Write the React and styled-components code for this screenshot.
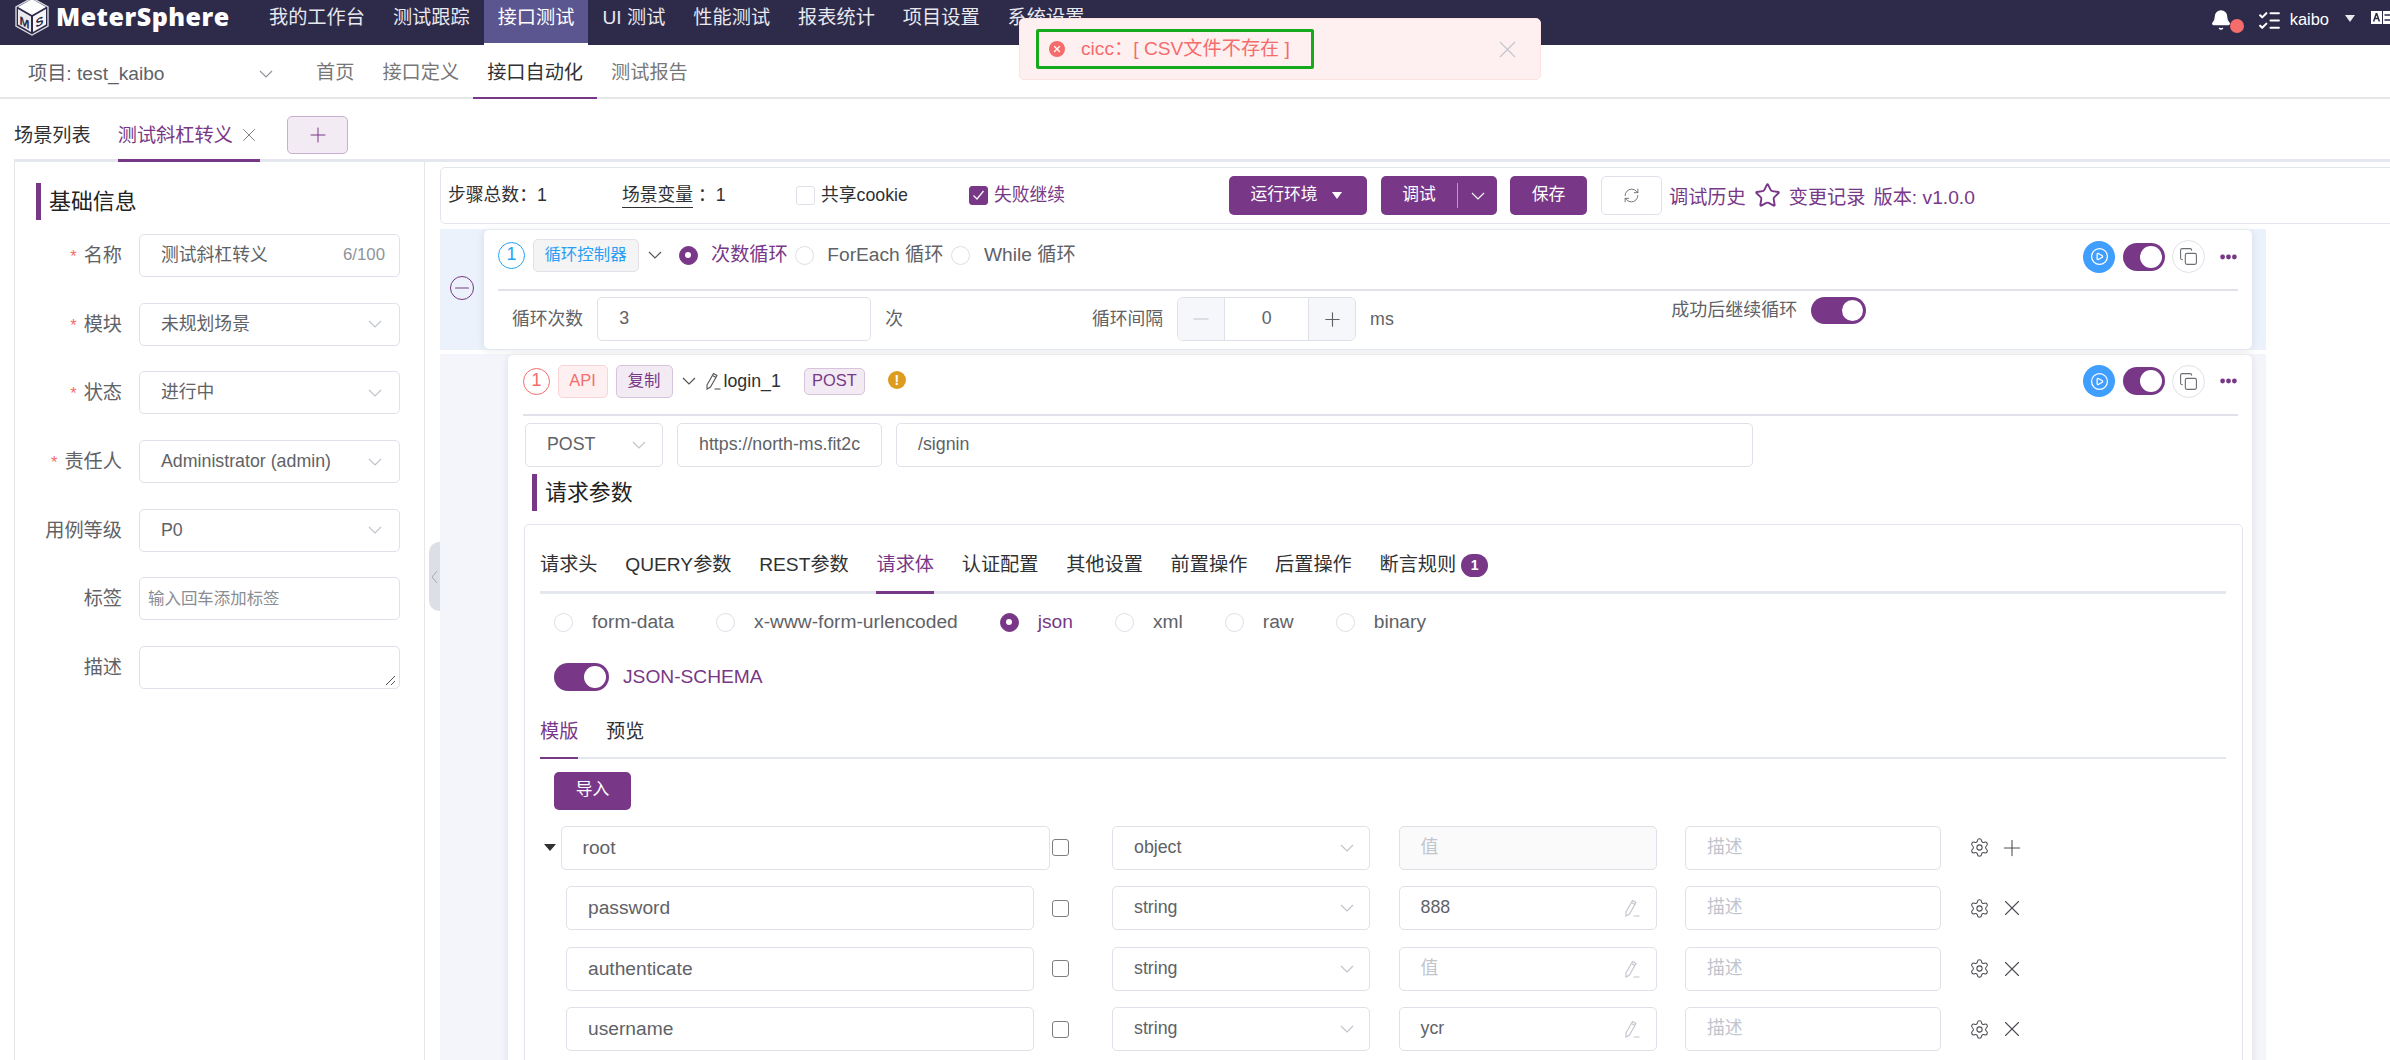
import React from "react";
import styled, { createGlobalStyle } from "styled-components";
import { Bell, ListChecks, RefreshCw, Star, Settings, Plus, X, Minus, CirclePlay, Copy } from "lucide-react";

const PURPLE = "#783887";
const BORDER = "#dfe1e9";
const TEXT = "#606266";

const Global = createGlobalStyle`
  html, body { margin: 0; padding: 0; background: #fff; overflow: hidden; }
  body, button { font-family: "Liberation Sans", "Noto Sans CJK SC", sans-serif; font-size: 19.2px; line-height: 1.2; color: ${TEXT}; }
  * { box-sizing: border-box; }
`;

const Page = styled.div`position: relative; width: 2390px; height: 1060px; overflow: hidden; display: flex; flex-direction: column;`;

/* top bar */
const TopBar = styled.header`height: 45px; flex: none; background: #2d2a4a; display: flex; align-items: stretch; color: #fff;`;
const Brand = styled.div`width: 255px; padding-left: 14px; display: flex; align-items: flex-start; gap: 6px;`;
const BrandName = styled.span`font-family: "Open Sans", "Liberation Sans", sans-serif; font-weight: 800; font-size: 25px; line-height: 32px; letter-spacing: 0.5px; color: #fff;`;
const TopItem = styled.div`
  padding: 0 14px; display: flex; align-items: center; height: 45px; padding-bottom: 8px;
  color: ${(p) => (p.$active ? "#fff" : "#e8e8ee")};
  background: ${(p) => (p.$active ? "#5b5590" : "transparent")};
  border-bottom: 2px solid ${(p) => (p.$active ? "#fff" : "transparent")};
`;
const TopRight = styled.div`margin-left: auto; display: flex; align-items: flex-start; padding-top: 10px; margin-right: -4px; flex: none;`;
const BellWrap = styled.div`position: relative; width: 18px; height: 20px; svg { display: block; margin-left: -2px; margin-top: -1px; }`;
const RedDot = styled.span`position: absolute; left: 18px; top: 9px; width: 14px; height: 14px; border-radius: 50%; background: #f56c6c;`;
const ListWrap = styled.div`margin-left: 27px; height: 20px; margin-top: -2px; svg { display: block; }`;
const UserName = styled.span`margin-left: 8px; font-size: 16.45px; line-height: 16px; margin-top: 1px; color: #fff;`;
const UserCaret = styled.span`margin-left: 16px; margin-top: 5px; width: 0; height: 0; border-left: 5.5px solid transparent; border-right: 5.5px solid transparent; border-top: 7px solid #e8e8ee;`;
const LangIcon = styled.svg`margin-left: 16px; margin-top: 1px; width: 23px; height: 13px; display: block; flex: none;`;

/* sub bar */
const SubBar = styled.nav`height: 54px; flex: none; display: flex; border-bottom: 2px solid #e6e6e6;`;
const ProjectSelect = styled.div`width: 302px; padding: 6px 29px 0 28px; display: flex; align-items: center; justify-content: space-between;`;
const SubTab = styled.div`
  padding: 3px 14px 0; display: flex; align-items: center; height: 54px;
  color: ${(p) => (p.$active ? "#303133" : "#777")};
  border-bottom: 2px solid ${(p) => (p.$active ? PURPLE : "transparent")};
  margin-bottom: -2px;
`;

/* scenario tabs */
const TabBar = styled.div`height: 63px; flex: none; margin-left: 14px; display: flex; border-bottom: 3px solid #e4e7ed;`;
const SceneTab = styled.div`
  margin-right: 27px;
  padding-top: 25px; height: 63px; display: flex; gap: 5.5px;
  color: ${(p) => (p.$active ? PURPLE : "#303133")};
  border-bottom: 3px solid ${(p) => (p.$active ? PURPLE : "transparent")};
  svg { color: #777; flex: none; }
`;
const AddTab = styled.div`margin-top: 17px; width: 61px; height: 38px; background: #f2ebf3; border: 1px solid #c9afcf; border-radius: 5px; color: ${PURPLE}; display: flex; align-items: center; justify-content: center;`;

const Body = styled.div`flex: 1; min-height: 0; display: flex;`;

/* left panel */
const LeftPanel = styled.aside`margin-left: 14px; width: 411px; flex: none; border-left: 1px solid #e6e6e6; border-right: 1px solid #e6e6e6; padding: 21px 0 0 21px;`;
const SectionTitle = styled.h3`
  margin: 0; border-left: 5px solid ${PURPLE}; height: 37px; padding: 1.5px 0 0 8px; font-size: 21.9px; font-weight: 400; color: #222; display: flex; align-items: center;
`;
const FormGrid = styled.div`margin: 14px 0 0 -21px; display: grid; grid-auto-rows: 43px; row-gap: 25.7px;`;
const FormRow = styled.div`display: flex; align-items: center;`;
const FormLabel = styled.label`width: 107px; text-align: right; margin-right: 17px; color: ${TEXT}; white-space: nowrap;`;
const Req = styled.span`color: #f56c6c; margin-right: 7px; font-size: 16.4px;`;
const Field = styled.div`
  height: ${(p) => p.$h || "43px"}; flex: none; width: ${(p) => p.$w || "auto"}; margin-left: ${(p) => p.$ml || "0"};
  border: 1px solid ${BORDER}; border-radius: 5px; background: ${(p) => (p.$disabled ? "#fafafa" : "#fff")};
  display: flex; align-items: center; justify-content: space-between; padding: 0 ${(p) => p.$pr || "17px"} 0 ${(p) => p.$pl || "21px"};
  color: ${TEXT}; white-space: nowrap; overflow: hidden; position: relative; font-size: ${(p) => p.$fs || "17.8px"};
`;
const Hint = styled.span`font-size: 16.8px; color: #909399; margin-right: -3px;`;
const Placeholder = styled.span`color: #c0c4cc;`;
const TagPlaceholder = styled.span`color: #8a8d93; font-size: 16.45px;`;
const ResizeMark = styled.svg`position: absolute; right: 3px; bottom: 2px; width: 11px; height: 11px;`;

const Gutter = styled.div`width: 15px; flex: none; position: relative;`;
const Handle = styled.div`position: absolute; left: 4px; top: 380px; width: 11px; height: 69px; background: #dcdfe6; border-radius: 10px 0 0 10px; display: flex; align-items: center; justify-content: center; color: #a8abb2;`;

/* main column */
const Main = styled.main`flex: 1; min-width: 0; overflow: hidden;`;
const Toolbar = styled.div`
  margin: 5px -10px 0 0; height: 57px; border: 1px solid #e4e4ec; border-radius: 5px; padding: 0 0 0 7px;
  display: flex; align-items: center;
`;
const Stat = styled.div`width: 174px; flex: none; font-size: 17.8px; color: #303133; white-space: nowrap;`;
const Underlined = styled.span`border-bottom: 1px solid #303133; padding-bottom: 2px;`;
const CheckItem = styled.div`
  width: ${(p) => p.$w}; flex: none; display: flex; align-items: center; font-size: 17.8px; gap: 6px;
  color: ${(p) => (p.$on ? PURPLE : "#303133")};
`;
const CheckBox = styled.span`
  width: ${(p) => p.$size || "19px"}; height: ${(p) => p.$size || "19px"}; flex: none; border-radius: 3px;
  border: 1px solid ${(p) => (p.$on ? PURPLE : p.$dark ? "#7d7d7d" : BORDER)};
  background: ${(p) => (p.$on ? PURPLE : "#fff")}; display: flex; align-items: center; justify-content: center;
`;
const PrimaryBtn = styled.button`
  height: ${(p) => p.$h || "39px"}; width: ${(p) => p.$w}; margin-left: ${(p) => p.$ml || "0"}; flex: none; border: 0; border-radius: 5px; padding: 0 ${(p) => p.$pr || "0"} 0 0;
  background: ${PURPLE}; color: #fff; font-size: 16.8px; display: flex; align-items: center; justify-content: center; gap: ${(p) => p.$gap || "0"};
`;
const Caret = styled.span`width: 0; height: 0; border-left: 5px solid transparent; border-right: 5px solid transparent; border-top: 7px solid #fff;`;
const SplitMain = styled.span`width: 77px; height: 25px; display: flex; align-items: center; justify-content: center; border-right: 1px solid rgba(255,255,255,.5);`;
const SplitArrow = styled.span`width: 39px; display: flex; align-items: center; justify-content: center;`;
const IconBtn = styled.button`height: 39px; width: 61px; margin-left: 14px; flex: none; background: #fff; border: 1px solid ${BORDER}; border-radius: 5px; padding: 0; display: flex; align-items: center; justify-content: center; color: #606266;`;
const LinkText = styled.span`color: ${PURPLE}; margin-left: ${(p) => p.$ml || "0"}; margin-top: 5px; flex: none; white-space: nowrap;`;
const StarWrap = styled.span`margin-left: 8px; height: 27px; flex: none; color: ${PURPLE}; svg { display: block; }`;

/* steps */
const BlueBand = styled.section`margin-top: 5px; width: 1826px; height: 121px; background: #ebf2fb; display: flex; align-items: center; position: relative;`;
const Collapse = styled.span`margin: 0 10px 3px 10px; width: 24px; height: 24px; border: 1.5px solid ${PURPLE}; border-radius: 50%; flex: none; display: flex; align-items: center; justify-content: center; color: ${PURPLE}; svg { flex: none; }`;
const GrayBand = styled.section`margin-top: 4px; width: 1826px; height: 900px; background: #f3f5fa; padding: 1px 0 0 68px;`;
const StepCard = styled.div`
  background: #fff; border-radius: 5px; box-shadow: 0 1px 8px rgba(40,40,60,.1);
  width: ${(p) => p.$w}; height: ${(p) => p.$h || "auto"}; padding: 0 14px 0 ${(p) => p.$pl};
`;
const StepHead = styled.div`height: ${(p) => p.$h}; display: flex; align-items: center;`;
const Badge = styled.span`width: 27px; height: 27px; border-radius: 50%; flex: none; border: 1px solid ${(p) => p.$c}; color: ${(p) => p.$c}; font-size: 17.8px; display: flex; align-items: center; justify-content: center;`;
const Tag = styled.span`
  height: ${(p) => p.$h || "33px"}; width: ${(p) => p.$w}; margin-left: ${(p) => p.$ml || "7.5px"}; flex: none; border-radius: 5px; font-size: 16.45px;
  display: flex; align-items: center; justify-content: center;
  background: ${(p) => p.$bg}; border: 1px solid ${(p) => p.$bd}; color: ${(p) => p.$c};
`;
const ChevronSvg = styled.svg`flex: none; width: ${(p) => p.$w || "14px"}; height: 8px; margin-left: ${(p) => p.$ml || "0"}; display: block;`;
const RadioDot = styled.span`
  width: 19px; height: 19px; flex: none; border-radius: 50%; border: 1px solid ${(p) => (p.$on ? PURPLE : "#dcdfe6")};
  background: ${(p) => (p.$on ? PURPLE : "#fff")}; display: flex; align-items: center; justify-content: center;
  &::after { content: ""; width: 6px; height: 6px; border-radius: 50%; background: ${(p) => (p.$on ? "#fff" : "transparent")}; }
`;
const RadioOption = styled.div`display: flex; align-items: center; gap: ${(p) => p.$gap || "13.5px"}; margin-left: ${(p) => p.$ml || "0"}; color: ${(p) => (p.$on ? PURPLE : TEXT)}; white-space: nowrap;`;
const StepActions = styled.div`margin-left: auto; display: flex; align-items: center; margin-top: ${(p) => p.$mt || "3px"};`;
const PlayBtn = styled.span`width: 32px; height: 32px; border-radius: 50%; background: #409eff; color: #fff; display: flex; align-items: center; justify-content: center;`;
const Toggle = styled.span`
  width: ${(p) => p.$w}; height: ${(p) => p.$h}; margin-left: ${(p) => p.$ml || "0"}; flex: none; border-radius: 20px; background: ${PURPLE}; display: flex; align-items: center; justify-content: flex-end; padding-right: 3px;
  &::after { content: ""; width: ${(p) => `calc(${p.$h} - 6px)`}; height: ${(p) => `calc(${p.$h} - 6px)`}; border-radius: 50%; background: #fff; }
`;
const CopyBtn = styled.span`width: 33px; height: 33px; margin-left: 7px; border-radius: 50%; background: #fff; border: 1px solid #e0e0e8; color: #6b6e75; display: flex; align-items: center; justify-content: center;`;
const MoreSvg = styled.svg`width: 17px; height: 6px; margin: 0 1px 0 15px; display: block;`;
const Divider = styled.div`height: ${(p) => p.$h || "2px"}; background: #e0e1ea;`;
const LoopRow = styled.div`margin-top: 6px; padding-left: 14px; display: flex; align-items: flex-start; font-size: 17.8px;`;
const LoopText = styled.span`margin-left: ${(p) => p.$ml || "0"}; line-height: 44px; white-space: nowrap; flex: none;`;
const NumberInput = styled.div`margin-left: 14px; width: 179px; height: 44px; border: 1px solid ${BORDER}; border-radius: 6px; overflow: hidden; flex: none; display: flex;`;
const NumberStep = styled.span`width: 47px; background: #f5f7fa; display: flex; align-items: center; justify-content: center; color: ${(p) => (p.$off ? "#c0c4cc" : "#606266")}; border-${(p) => (p.$off ? "right" : "left")}: 1px solid ${BORDER}; svg { flex: none; }`;
const NumberValue = styled.span`flex: 1; display: flex; align-items: center; justify-content: center;`;
const AfterLoop = styled.div`margin-left: 277.5px; display: flex; align-items: center; height: 27px; gap: 13.5px; flex: none; font-size: 18px; white-space: nowrap;`;

const LoginName = styled.span`margin-left: 3px; color: #303133; margin-top: 2px; font-size: 17.8px;`;
const EditMark = styled.span`margin-left: ${(p) => p.$ml || "0"}; height: 18px; color: ${(p) => p.$c}; flex: none; svg { display: block; }`;
const Warn = styled.span`margin-left: 23px; margin-top: -2px; width: 18px; height: 18px; border-radius: 50%; background: #dd9c1f; color: #fff; font-size: 14px; font-weight: 700; display: flex; align-items: center; justify-content: center;`;
const RequestRow = styled.div`margin-top: 7px; padding-left: 2px; display: flex; height: 44px;`;
const TitleWrap = styled.div`margin: 7px 0 13px 9px;`;
const ParamPanel = styled.div`margin-left: 1px; width: 1719px; border: 1px solid #e4e4ec; border-radius: 5px; padding: 0 16px 0 15px; height: 560px;`;
const InnerTabs = styled.div`height: ${(p) => p.$h}; padding-top: ${(p) => p.$pt}; border-bottom: ${(p) => p.$line} solid #e4e7ed; display: flex; gap: 27.7px;`;
const InnerTab = styled.div`
  height: calc(100% + ${(p) => p.$line}); display: flex; align-items: center; gap: 5px; white-space: nowrap;
  color: ${(p) => (p.$active ? PURPLE : "#303133")};
  border-bottom: ${(p) => p.$line} solid ${(p) => (p.$active ? PURPLE : "transparent")};
`;
const CountBadge = styled.span`width: 27px; height: 23px; border-radius: 12px; background: ${PURPLE}; color: #fff; font-size: 14px; font-weight: 700; display: flex; align-items: center; justify-content: center;`;
const BodyTypes = styled.div`height: 57px; padding-left: 14px; display: flex; align-items: center; gap: 42px;`;
const SchemaSwitch = styled.div`margin: 12px 0 0 14px; display: flex; align-items: center; gap: 14px; color: ${PURPLE};`;
const ImportWrap = styled.div`margin: 13px 0 16px 14px;`;
const SchemaRows = styled.div`display: grid; grid-auto-rows: 44px; row-gap: 16.5px;`;
const SchemaRow = styled.div`display: flex; align-items: center;`;
const NameCell = styled.div`width: 493.5px; flex: none; padding-left: ${(p) => (p.$root ? "4px" : "26px")}; display: flex; align-items: center; gap: 4.5px;`;
const TreeCaret = styled.span`flex: none; width: 0; height: 0; border-left: 6px solid transparent; border-right: 6px solid transparent; border-top: 7px solid #303133;`;
const CheckSlot = styled.span`margin-left: 18px; flex: none;`;
const RowIcon = styled.span`margin-left: ${(p) => p.$ml}; width: ${(p) => p.$w}; display: flex; justify-content: center; flex: none; color: #4c4e55; svg { display: block; flex: none; }`;

/* toast */
const Toast = styled.div`position: absolute; left: 1019px; top: 18px; width: 522px; height: 62px; background: #fef0f0; border: 1px solid #fde2e2; border-radius: 5px; display: flex; align-items: center; padding: 0 18px 0 16px;`;
const Highlight = styled.div`width: 278px; height: 40px; border: 3px solid #16a91c; border-radius: 2px; display: flex; align-items: center; padding-left: 10px; gap: 16px; color: #f56c6c; white-space: nowrap;`;
const ErrIcon = styled.span`width: 16px; height: 16px; border-radius: 50%; background: #f56c6c; color: #fff; display: flex; align-items: center; justify-content: center; flex: none;`;
const ToastClose = styled.span`margin-left: auto; color: #c0c4cc; display: flex;`;

const Chevron = ({ c = "#c0c4cc", w, ml }) => (
  <ChevronSvg $w={w} $ml={ml} viewBox="0 0 14 8" fill="none"><path d="M1 1l6 6 6-6" stroke={c} strokeWidth="1.2" /></ChevronSvg>
);
const PencilLine = () => (
  <svg width="16" height="18" viewBox="0 0 16 18" fill="none" stroke="currentColor" strokeWidth="1.1">
    <path d="M2 13 8.5 1.5l3.5 2L5.5 15 2 17z" />
    <path d="M7.5 3.4l3.5 2" /><path d="M9.5 17h6" />
  </svg>
);
const LogoMark = () => (
  <svg width="36" height="36" viewBox="0 0 36 36" style={{ display: "block" }}>
    <path d="M18 -2 34 7v19L18 35 2 26V7z" fill="none" stroke="#d8d8e0" strokeWidth="1.4" />
    <path d="M18 -1 32 7 18 15 4 7z" fill="#fff" />
    <path d="M4 9l13 7.6V32L4 24.4z" fill="#e9e9ee" />
    <path d="M32 9l-13 7.6V32l13-7.6z" fill="#f6f6f8" />
    <text x="10.5" y="26" fontSize="12" fontWeight="800" fill="#2d2a4a" fontFamily="Liberation Sans" textAnchor="middle" transform="skewY(28) translate(0 -5)">M</text>
    <text x="25.5" y="26" fontSize="12" fontWeight="800" fill="#2d2a4a" fontFamily="Liberation Sans" textAnchor="middle" transform="skewY(-28) translate(0 13.5)">S</text>
  </svg>
);
const Head = ({ mt }) => (
  <StepActions $mt={mt}>
    <PlayBtn><CirclePlay size={19} strokeWidth={1.6} /></PlayBtn>
    <Toggle $w="42px" $h="28px" $ml="8px" />
    <CopyBtn><Copy size={19} strokeWidth={1.4} /></CopyBtn>
    <MoreSvg viewBox="0 0 17 6" fill={PURPLE}><circle cx="2.6" cy="3" r="2.4" /><circle cx="8.5" cy="3" r="2.4" /><circle cx="14.4" cy="3" r="2.4" /></MoreSvg>
  </StepActions>
);

const topNav = ["我的工作台", "测试跟踪", "接口测试", "UI 测试", "性能测试", "报表统计", "项目设置", "系统设置"];
const subNav = ["首页", "接口定义", "接口自动化", "测试报告"];
const reqTabs = ["请求头", "QUERY参数", "REST参数", "请求体", "认证配置", "其他设置", "前置操作", "后置操作"];
const bodyTypes = ["form-data", "x-www-form-urlencoded", "json", "xml", "raw", "binary"];
const formRows = [
  { label: "名称", req: true, value: "测试斜杠转义", hint: "6/100" },
  { label: "模块", req: true, value: "未规划场景", select: true },
  { label: "状态", req: true, value: "进行中", select: true },
  { label: "责任人", req: true, value: "Administrator (admin)", select: true },
  { label: "用例等级", value: "P0", select: true },
];
const schema = [
  { name: "root", type: "object", root: true },
  { name: "password", type: "string", value: "888" },
  { name: "authenticate", type: "string" },
  { name: "username", type: "string", value: "ycr" },
];

export default function App() {
  return (
    <Page>
      <Global />
      <TopBar>
        <Brand><LogoMark /><BrandName>MeterSphere</BrandName></Brand>
        {topNav.map((t) => <TopItem key={t} $active={t === "接口测试"}>{t}</TopItem>)}
        <TopRight>
          <BellWrap><Bell size={22} fill="#fff" color="#fff" strokeWidth={1.5} /><RedDot /></BellWrap>
          <ListWrap><ListChecks size={25} color="#fff" strokeWidth={2} /></ListWrap>
          <UserName>kaibo</UserName>
          <UserCaret />
          <LangIcon viewBox="0 0 23 13">
            <rect x="0" y="0" width="11" height="13" fill="#fff" />
            <path d="M5.5 2 2.6 10.5M5.5 2l2.9 8.5M3.6 7.6h3.8" stroke="#2d2a4a" strokeWidth="1.5" fill="none" />
            <rect x="12" y="0" width="11" height="13" fill="#fff" />
            <path d="M13.5 4h8M13.5 9h8" stroke="#2d2a4a" strokeWidth="1.3" />
          </LangIcon>
        </TopRight>
      </TopBar>

      <SubBar>
        <ProjectSelect>项目: test_kaibo<Chevron c="#909399" /></ProjectSelect>
        {subNav.map((t) => <SubTab key={t} $active={t === "接口自动化"}>{t}</SubTab>)}
      </SubBar>

      <TabBar>
        <SceneTab>场景列表</SceneTab>
        <SceneTab $active>测试斜杠转义<X size={22} strokeWidth={1} /></SceneTab>
        <AddTab><Plus size={24} strokeWidth={1} /></AddTab>
      </TabBar>

      <Body>
        <LeftPanel>
          <SectionTitle>基础信息</SectionTitle>
          <FormGrid>
            {formRows.map((r) => (
              <FormRow key={r.label}>
                <FormLabel>{r.req && <Req>*</Req>}{r.label}</FormLabel>
                <Field $w="261px">
                  {r.value}
                  {r.hint && <Hint>{r.hint}</Hint>}
                  {r.select && <Chevron />}
                </Field>
              </FormRow>
            ))}
            <FormRow>
              <FormLabel>标签</FormLabel>
              <Field $w="261px" $pl="8px"><TagPlaceholder>输入回车添加标签</TagPlaceholder></Field>
            </FormRow>
            <FormRow>
              <FormLabel>描述</FormLabel>
              <Field $w="261px">
                <ResizeMark viewBox="0 0 11 11" fill="none" stroke="#555" strokeWidth="1"><path d="M1 10 10 1M6 10l4-4" /></ResizeMark>
              </Field>
            </FormRow>
          </FormGrid>
        </LeftPanel>

        <Gutter>
          <Handle>
            <svg width="7" height="14" viewBox="0 0 7 14" fill="none" stroke="#a8abb2" strokeWidth="1"><path d="M6 1 1 7l5 6" /></svg>
          </Handle>
        </Gutter>

        <Main>
          <Toolbar>
            <Stat>步骤总数：1</Stat>
            <Stat><Underlined>场景变量</Underlined> ：1</Stat>
            <CheckItem $w="173px"><CheckBox />共享cookie</CheckItem>
            <CheckItem $w="260px" $on>
              <CheckBox $on>
                <svg width="13" height="11" viewBox="0 0 13 11" fill="none" stroke="#fff" strokeWidth="1.2"><path d="M1.5 5.5 5 9l6.5-8" /></svg>
              </CheckBox>
              失败继续
            </CheckItem>
            <PrimaryBtn $w="138px" $gap="14px" $pr="4px">运行环境<Caret /></PrimaryBtn>
            <PrimaryBtn $w="116px" $ml="14px"><SplitMain>调试</SplitMain><SplitArrow><Chevron c="#fff" /></SplitArrow></PrimaryBtn>
            <PrimaryBtn $w="77px" $ml="13px">保存</PrimaryBtn>
            <IconBtn><RefreshCw size={17} strokeWidth={1.2} /></IconBtn>
            <LinkText $ml="7px">调试历史</LinkText>
            <StarWrap><Star size={27} strokeWidth={1.7} /></StarWrap>
            <LinkText $ml="8px">变更记录</LinkText>
            <LinkText $ml="8px">版本: v1.0.0</LinkText>
          </Toolbar>

          <BlueBand>
            <Collapse><Minus size={22} strokeWidth={1.3} /></Collapse>
            <StepCard $w="1768px" $h="119px" $pl="14px">
              <StepHead $h="50px">
                <Badge $c="#1fa4f6">1</Badge>
                <Tag $w="106px" $bg="#f4f4f5" $bd="#e4dfe8" $c="#2a9df4">循环控制器</Tag>
                <Chevron c="#555" ml="9px" />
                <RadioOption $on $ml="17px"><RadioDot $on />次数循环</RadioOption>
                <RadioOption $ml="7px"><RadioDot />ForEach 循环</RadioOption>
                <RadioOption $ml="8px"><RadioDot />While 循环</RadioOption>
                <Head />
              </StepHead>
              <div style={{ height: 9 }} />
              <Divider />
              <LoopRow>
                <LoopText>循环次数</LoopText>
                <Field $w="274px" $h="44px" $ml="14px" $pl="21px">3</Field>
                <LoopText $ml="14px">次</LoopText>
                <LoopText $ml="189px">循环间隔</LoopText>
                <NumberInput>
                  <NumberStep $off><Minus size={24} strokeWidth={1.2} /></NumberStep>
                  <NumberValue>0</NumberValue>
                  <NumberStep><Plus size={23} strokeWidth={1.2} /></NumberStep>
                </NumberInput>
                <LoopText $ml="14px">ms</LoopText>
                <AfterLoop>成功后继续循环<Toggle $w="55px" $h="27px" /></AfterLoop>
              </LoopRow>
            </StepCard>
          </BlueBand>

          <GrayBand>
            <StepCard $w="1744px" $h="900px" $pl="15px">
              <StepHead $h="52px">
                <Badge $c="#f56c6c">1</Badge>
                <Tag $w="50px" $bg="#fef0f0" $bd="#fbd5d5" $c="#f56c6c">API</Tag>
                <Tag $w="57px" $ml="8px" $bg="#f2ebf3" $bd="#d7c3db" $c={PURPLE}>复制</Tag>
                <Chevron c="#555" ml="9px" />
                <EditMark $ml="9px" $c="#555"><PencilLine /></EditMark>
                <LoginName>login_1</LoginName>
                <Tag $w="61px" $h="27px" $ml="23px" $bg="#f2ebf3" $bd="#d7c3db" $c={PURPLE}>POST</Tag>
                <Warn>!</Warn>
                <Head mt="0" />
              </StepHead>
              <div style={{ height: 7 }} />
              <Divider $h="1.5px" />
              <RequestRow>
                <Field $w="138px" $h="44px" $pr="16px">POST<Chevron /></Field>
                <Field $w="205px" $h="44px" $ml="14px">https://north-ms.fit2c</Field>
                <Field $w="856.6px" $h="44px" $ml="14px">/signin</Field>
              </RequestRow>
              <TitleWrap><SectionTitle>请求参数</SectionTitle></TitleWrap>
              <ParamPanel>
                <InnerTabs $h="69px" $pt="15px" $line="3px">
                  {reqTabs.map((t) => <InnerTab key={t} $line="3px" $active={t === "请求体"}>{t}</InnerTab>)}
                  <InnerTab $line="3px">断言规则<CountBadge>1</CountBadge></InnerTab>
                </InnerTabs>
                <BodyTypes>
                  {bodyTypes.map((t) => <RadioOption key={t} $gap="19px" $on={t === "json"}><RadioDot $on={t === "json"} />{t}</RadioOption>)}
                </BodyTypes>
                <SchemaSwitch><Toggle $w="55px" $h="28px" />JSON-SCHEMA</SchemaSwitch>
                <InnerTabs $h="68px" $pt="16px" $line="2px">
                  <InnerTab $line="2px" $active>模版</InnerTab>
                  <InnerTab $line="2px">预览</InnerTab>
                </InnerTabs>
                <ImportWrap><PrimaryBtn $w="77px" $h="38px">导入</PrimaryBtn></ImportWrap>
                <SchemaRows>
                  {schema.map((r) => (
                    <SchemaRow key={r.name}>
                      <NameCell $root={r.root}>
                        {r.root && <TreeCaret />}
                        <Field $w="100%" $h="44px" $fs="19.2px">{r.name}</Field>
                      </NameCell>
                      <CheckSlot><CheckBox $size="17px" $dark /></CheckSlot>
                      <Field $w="258px" $h="44px" $ml="43.5px" $pr="15px">{r.type}<Chevron /></Field>
                      <Field $w="258.5px" $h="44px" $ml="28.5px" $disabled={r.root} $pr="16px">
                        {r.value ? r.value : <Placeholder>值</Placeholder>}
                        {!r.root && <EditMark $c="#c0c4cc"><PencilLine /></EditMark>}
                      </Field>
                      <Field $w="256px" $h="44px" $ml="28px"><Placeholder>描述</Placeholder></Field>
                      <RowIcon $ml="29.5px" $w="17px"><Settings size={21} strokeWidth={1.2} /></RowIcon>
                      <RowIcon $ml="17px" $w="15px">{r.root ? <Plus size={26} strokeWidth={1} /> : <X size={26} strokeWidth={1} />}</RowIcon>
                    </SchemaRow>
                  ))}
                </SchemaRows>
              </ParamPanel>
            </StepCard>
          </GrayBand>
        </Main>
      </Body>

      <Toast>
        <Highlight>
          <ErrIcon><X size={10} strokeWidth={3} /></ErrIcon>
          <span>cicc：[ CSV文件不存在 ]</span>
        </Highlight>
        <ToastClose><X size={29} strokeWidth={0.9} /></ToastClose>
      </Toast>
    </Page>
  );
}
